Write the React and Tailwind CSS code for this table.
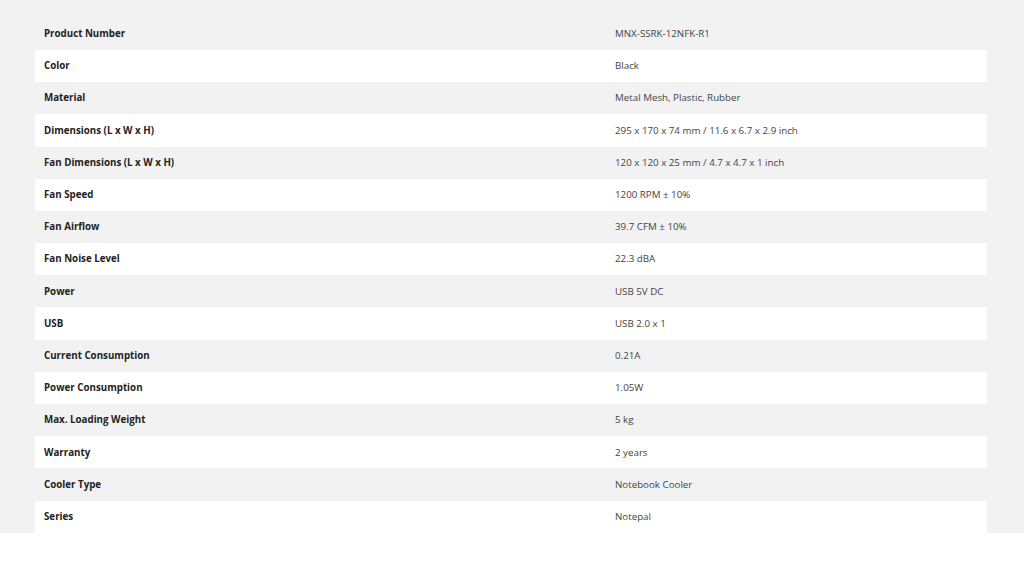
import React from "react";

const rows = [
  ["Product Number", "MNX-SSRK-12NFK-R1"],
  ["Color", "Black"],
  ["Material", "Metal Mesh, Plastic, Rubber"],
  ["Dimensions (L x W x H)", "295 x 170 x 74 mm / 11.6 x 6.7 x 2.9 inch"],
  ["Fan Dimensions (L x W x H)", "120 x 120 x 25 mm / 4.7 x 4.7 x 1 inch"],
  ["Fan Speed", "1200 RPM ± 10%"],
  ["Fan Airflow", "39.7 CFM ± 10%"],
  ["Fan Noise Level", "22.3 dBA"],
  ["Power", "USB 5V DC"],
  ["USB", "USB 2.0 x 1"],
  ["Current Consumption", "0.21A"],
  ["Power Consumption", "1.05W"],
  ["Max. Loading Weight", "5 kg"],
  ["Warranty", "2 years"],
  ["Cooler Type", "Notebook Cooler"],
  ["Series", "Notepal"],
];

export default function App() {
  return (
    <div className="w-[1024px] h-[582px] bg-white" style={{ fontFamily: '"Open Sans", sans-serif' }}>
      <div className="bg-[#f2f2f2] pt-[17.8px] pl-[35px] pr-[37px]">
        <div className="flex flex-col">
          {rows.map(([k, v], i) => (
            <div
              key={k}
              className={`flex items-center h-[32.2px] pt-[1px] text-[9.75px] ${i % 2 === 1 ? "bg-white" : "bg-[#f2f2f2]"}`}
            >
              <div className="w-[571px] pl-[9px] font-bold text-[#222]">{k}</div>
              <div className="flex-1 pl-[9px] text-[#444]">{v}</div>
            </div>
          ))}
        </div>
      </div>
    </div>
  );
}
